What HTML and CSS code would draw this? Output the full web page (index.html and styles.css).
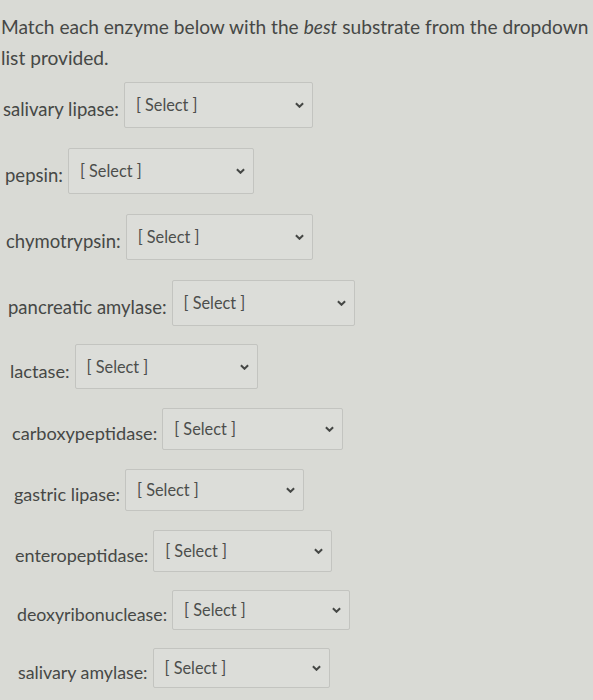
FILE: index.html
```html
<!DOCTYPE html>
<html>
<head>
<meta charset="utf-8">
<link rel="stylesheet" href="styles.css">
</head>
<body>
<div class="page">
  <p class="intro">Match each enzyme below with the <em>best</em> substrate from the dropdown<br>list provided.</p>
  <div class="list">
    <div class="row r1"><span class="label">salivary lipase:</span><div class="select"><span>[ Select ]</span><svg class="chev" viewBox="0 0 10 6"><path d="M1 1 L5 5 L9 1"/></svg></div></div>
    <div class="row r2"><span class="label">pepsin:</span><div class="select"><span>[ Select ]</span><svg class="chev" viewBox="0 0 10 6"><path d="M1 1 L5 5 L9 1"/></svg></div></div>
    <div class="row r3"><span class="label">chymotrypsin:</span><div class="select"><span>[ Select ]</span><svg class="chev" viewBox="0 0 10 6"><path d="M1 1 L5 5 L9 1"/></svg></div></div>
    <div class="row r4"><span class="label">pancreatic amylase:</span><div class="select"><span>[ Select ]</span><svg class="chev" viewBox="0 0 10 6"><path d="M1 1 L5 5 L9 1"/></svg></div></div>
    <div class="row r5"><span class="label">lactase:</span><div class="select"><span>[ Select ]</span><svg class="chev" viewBox="0 0 10 6"><path d="M1 1 L5 5 L9 1"/></svg></div></div>
    <div class="row r6"><span class="label">carboxypeptidase:</span><div class="select"><span>[ Select ]</span><svg class="chev" viewBox="0 0 10 6"><path d="M1 1 L5 5 L9 1"/></svg></div></div>
    <div class="row r7"><span class="label">gastric lipase:</span><div class="select"><span>[ Select ]</span><svg class="chev" viewBox="0 0 10 6"><path d="M1 1 L5 5 L9 1"/></svg></div></div>
    <div class="row r8"><span class="label">enteropeptidase:</span><div class="select"><span>[ Select ]</span><svg class="chev" viewBox="0 0 10 6"><path d="M1 1 L5 5 L9 1"/></svg></div></div>
    <div class="row r9"><span class="label">deoxyribonuclease:</span><div class="select"><span>[ Select ]</span><svg class="chev" viewBox="0 0 10 6"><path d="M1 1 L5 5 L9 1"/></svg></div></div>
    <div class="row r10"><span class="label">salivary amylase:</span><div class="select"><span>[ Select ]</span><svg class="chev" viewBox="0 0 10 6"><path d="M1 1 L5 5 L9 1"/></svg></div></div>
  </div>
</div>
</body>
</html>
```
FILE: styles.css
```css
html, body {
  margin: 0;
  padding: 0;
  background: #d9dad5;
}
.page {
  width: 593px;
  height: 700px;
  overflow: hidden;
  font-family: Lato, "Liberation Sans", sans-serif;
  color: #464846;
}
.intro {
  margin: 0;
  padding: 11px 0 0 1px;
  font-size: 19.15px;
  line-height: 31px;
  white-space: nowrap;
}
.intro em {
  font-style: italic;
}
.list {
  display: flex;
  flex-direction: column;
  margin-top: 9px;
}
.row {
  display: flex;
  align-items: center;
  gap: 5px;
  font-size: 18.5px;
}
.label {
  white-space: nowrap;
  margin-top: 8px;
}
.select {
  display: flex;
  align-items: center;
  justify-content: space-between;
  box-sizing: border-box;
  background: #dcddd9;
  border: 1px solid #c3c4c0;
  border-radius: 2px;
  padding: 0 8px 0 11px;
  font-size: 16.3px;
  color: #4c4e4c;
}
.select span {
  margin-top: -1px;
}
.chev {
  width: 9px;
  height: 6px;
  fill: none;
  stroke: #454745;
  stroke-width: 2.2;
}
.r1 { padding-left: 3px; height: 46px; }
.r1 .select { width: 189px; height: 46px; }
.r2 { padding-left: 5px; height: 46px; margin-top: 20px; }
.r2 .select { width: 186px; height: 46px; }
.r3 { padding-left: 6px; height: 46px; margin-top: 20px; }
.r3 .select { width: 187px; height: 46px; }
.r4 { padding-left: 8px; height: 46px; margin-top: 20px; }
.r4 .select { width: 183px; height: 46px; }
.r5 { padding-left: 10px; height: 45px; margin-top: 18px; font-size: 18.2px; }
.r5 .select { width: 183px; height: 45px; }
.r6 { padding-left: 12px; height: 42px; margin-top: 19px; font-size: 18.2px; }
.r6 .select { width: 181px; height: 42px; }
.r7 { padding-left: 14px; height: 42px; margin-top: 19px; font-size: 18px; }
.r7 .select { width: 179px; height: 42px; }
.r8 { padding-left: 15px; height: 42px; margin-top: 19px; font-size: 18px; }
.r8 .select { width: 179px; height: 42px; }
.r9 { padding-left: 17px; height: 40px; margin-top: 18px; font-size: 17.8px; }
.r9 .select { width: 178px; height: 40px; }
.r10 { padding-left: 18px; height: 40px; margin-top: 18px; font-size: 17.8px; }
.r10 .select { width: 177px; height: 40px; }
```
